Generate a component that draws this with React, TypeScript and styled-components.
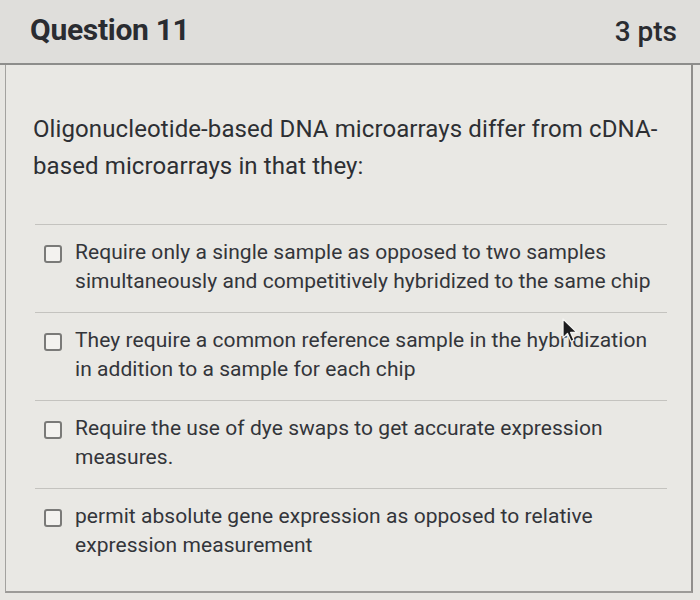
import React from "react";
import styled, { createGlobalStyle } from "styled-components";

const Global = createGlobalStyle`
  html, body { margin: 0; padding: 0; background: #e7e6e2; }
  body { font-family: Roboto, "Liberation Sans", Arial, sans-serif; color: #2e3034; }
`;

const Page = styled.div`
  width: 700px;
  height: 600px;
  overflow: hidden;
  background: #e7e6e2;
  position: relative;
`;

const Header = styled.header`
  height: 65px;
  box-sizing: border-box;
  display: flex;
  align-items: flex-start;
  justify-content: space-between;
  padding: 12px 23px 0 30px;
  background: #dfdedb;
  border-bottom: 2px solid #8d8d8b;
`;

const Title = styled.h2`
  margin: 0;
  font-size: 30px;
  line-height: 36px;
  font-weight: 700;
  color: #2a2c31;
  letter-spacing: -0.3px;
`;

const Points = styled.span`
  font-size: 28px;
  line-height: 36px;
  font-weight: 500;
  color: #2a2c31;
  margin-top: 2px;
`;

const Body = styled.section`
  margin: 0 7px 0 5px;
  height: 528px;
  box-sizing: border-box;
  border-left: 1px solid #a3a29f;
  border-right: 2px solid #8f8e8b;
  border-bottom: 2px solid #9c9b98;
  background: #e9e8e4;
  padding: 46px 24px 0 27px;
`;

const Prompt = styled.p`
  margin: 0 0 39px;
  font-size: 24px;
  line-height: 37px;
  color: #2d2f33;
  letter-spacing: 0.1px;
`;

const Answers = styled.ul`
  list-style: none;
  margin: 0 0 0 2px;
  padding: 0;
`;

const Answer = styled.li`
  display: flex;
  align-items: flex-start;
  gap: 13px;
  border-top: 1px solid #c4c3bf;
  padding: 13px 0 16px 9px;
  min-height: 58px;
`;

const Box = styled.span`
  flex: none;
  width: 14px;
  height: 14px;
  margin-top: 7px;
  border: 2px solid #7a7a78;
  border-radius: 3px;
  background: #f3f2ef;
`;

const AnswerText = styled.span`
  max-width: 580px;
  font-size: 21px;
  line-height: 29px;
  color: #33353a;
  letter-spacing: 0.05px;
`;

const Cursor = styled.svg`
  position: absolute;
  left: 562px;
  top: 318px;
`;

const answers = [
  "Require only a single sample as opposed to two samples simultaneously and competitively hybridized to the same chip",
  "They require a common reference sample in the hybridization in addition to a sample for each chip",
  "Require the use of dye swaps to get accurate expression measures.",
  "permit absolute gene expression as opposed to relative expression measurement",
];

export default function App() {
  return (
    <Page>
      <Global />
      <Header>
        <Title>Question 11</Title>
        <Points>3 pts</Points>
      </Header>
      <Body>
        <Prompt>
          Oligonucleotide-based DNA microarrays differ from cDNA-based microarrays in that they:
        </Prompt>
        <Answers>
          {answers.map((a) => (
            <Answer key={a}>
              <Box />
              <AnswerText>{a}</AnswerText>
            </Answer>
          ))}
        </Answers>
      </Body>
      <Cursor width="18" height="26" viewBox="0 0 18 26">
        <path
          d="M1 1 L1 20 L5.5 15.5 L9 23.5 L12 22.2 L8.6 14.5 L15 14.5 Z"
          fill="#1d1d1f"
          stroke="#f4f4f2"
          strokeWidth="1.3"
          strokeLinejoin="round"
        />
      </Cursor>
    </Page>
  );
}
